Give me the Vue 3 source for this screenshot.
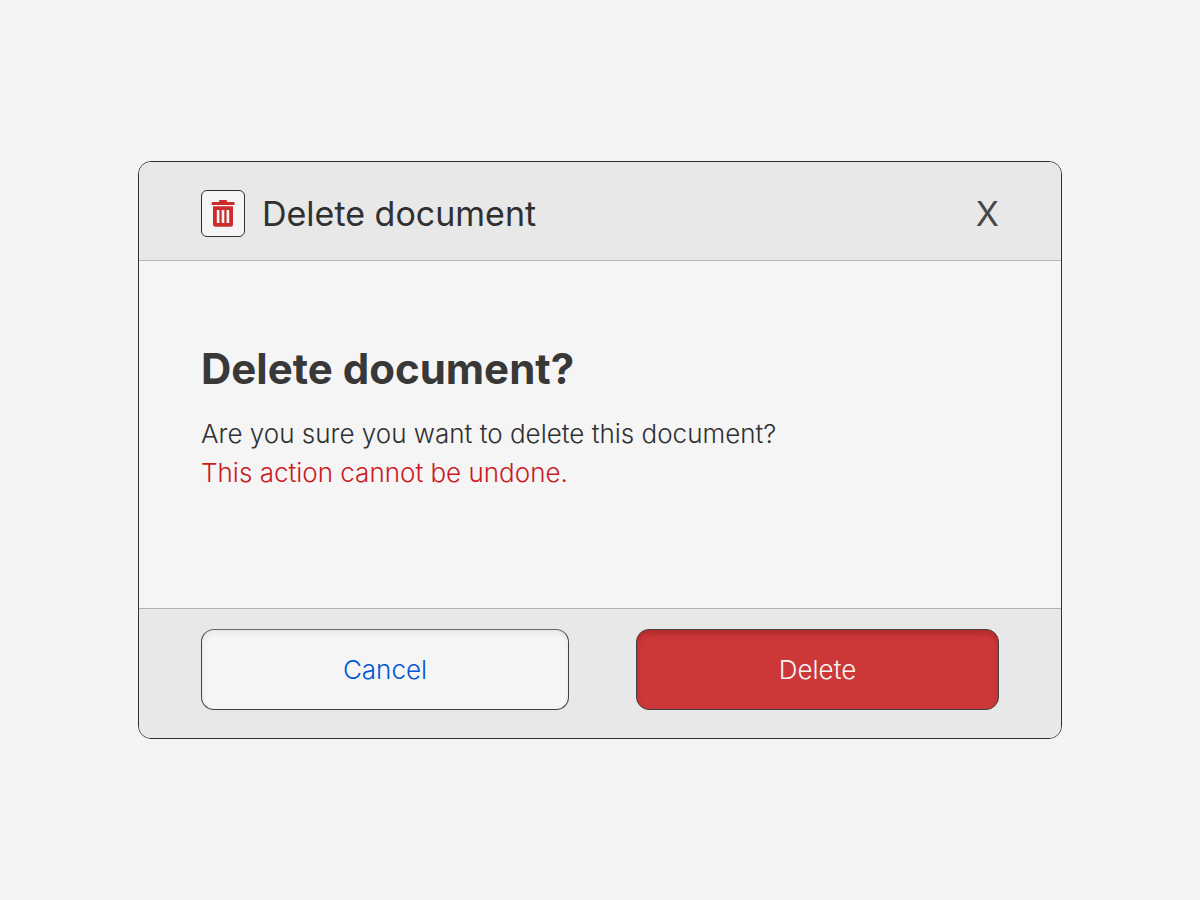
<script setup>
import { ref } from 'vue'

const open = ref(true)
const close = () => {
  open.value = false
}
</script>

<template>
  <main class="page">
    <section v-if="open" class="dialog" role="dialog" aria-modal="true" aria-labelledby="question">
      <header class="bar">
        <span class="badge">
          <svg viewBox="0 0 24 29" width="24" height="29" aria-hidden="true">
            <path d="M8 2Q8 1 9 1H15Q16 1 16 2V3H22.600Q23.600 3 23.600 4V6H.600V4Q.600 3 1.600 3H8Z" />
            <path fill-rule="evenodd" d="M2 7.200H22V25.300Q22 27.800 19.500 27.800H4.500Q2 27.800 2 25.300ZM5.800 11V24H8.400V11ZM10.700 11V24H13.300V11ZM15.600 11V24H18.200V11Z" />
          </svg>
        </span>
        <span class="title">Delete document</span>
        <button class="close" type="button" aria-label="Close X" @click="close">X</button>
      </header>
      <div class="content">
        <h1 id="question">Delete document?</h1>
        <p>Are you sure you want to delete this document?</p>
        <p class="warning">This action cannot be undone.</p>
      </div>
      <footer class="actions">
        <button class="action cancel" type="button" @click="close">Cancel</button>
        <button class="action delete" type="button" @click="close">Delete</button>
      </footer>
    </section>
  </main>
</template>

<style>
body {
  background: #f4f4f4;
}
</style>

<style scoped>
.page {
  display: grid;
  place-items: center;
  min-height: 100vh;
  font-family: Inter, "Liberation Sans", sans-serif;
}

.dialog {
  box-sizing: border-box;
  width: 77%;
  overflow: hidden;
  border: 1px solid #303030;
  border-radius: 13px;
  background: #f5f5f5;
  color: #303030;
}

.bar {
  display: flex;
  align-items: center;
  padding: 28px 62px 23px;
  border-bottom: 1px solid #b8b8b8;
  background: #e8e8e8;
}

.badge {
  display: grid;
  place-items: center;
  box-sizing: border-box;
  width: 44px;
  height: 47px;
  border: 1px solid #303030;
  border-radius: 6px;
  background: #f5f5f5;
  fill: #cc2c2d;
}

.title {
  margin-left: 17px;
  font-size: 34px;
  line-height: 47px;
}

.close {
  margin-left: auto;
  padding: 0;
  border: 0;
  background: none;
  color: #484848;
  font: 400 34px/47px Inter, "Liberation Sans", sans-serif;
}

.content {
  padding: 81px 62px 116px;
}

h1 {
  margin: 0 0 19px;
  color: #383838;
  font-size: 42px;
  font-weight: 700;
  line-height: 53px;
}

p {
  margin: 0;
  font-size: 26px;
  font-weight: 300;
  line-height: 39px;
}

.warning {
  color: #cc1a1f;
}

.actions {
  display: flex;
  gap: 67px;
  padding: 20px 62px 28px;
  border-top: 1px solid #b0b0b0;
  background: #e8e8e8;
}

.action {
  height: 81px;
  padding: 0;
  border: 1px solid #404040;
  border-radius: 13px;
  font: 300 26px/39px Inter, "Liberation Sans", sans-serif;
}

.cancel {
  flex: 368 1 0;
  border-top-color: #686868;
  background: #f5f5f5;
  box-shadow: inset 0 3px 5px #e6e6e6;
  color: #0055d8;
}

.delete {
  flex: 363 1 0;
  background: #cc3738;
  box-shadow: inset 0 4px 5px #b52b2c;
  color: #f5f5f5;
}
</style>
